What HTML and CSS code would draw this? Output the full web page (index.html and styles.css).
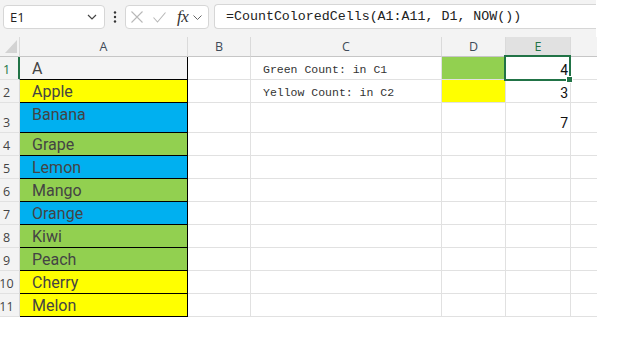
FILE: index.html
```html
<!DOCTYPE html>
<html>
	<head>
		<meta charset="utf-8" />
		<title>Book1 - Excel</title>
		<link rel="stylesheet" href="styles.css">
	</head>
	<body>
		<div class="toolbar">
			<div class="namebox">
				<span>E1</span>
				<svg class="chev" width="10" height="6" viewBox="0 0 10 6"><path d="M1 1 L5 5 L9 1" fill="none" stroke="#444" stroke-width="1.2"/></svg>
			</div>
			<div class="dots">
				<svg width="4" height="12" viewBox="0 0 4 12"><circle cx="2" cy="1.5" r="1.2" fill="#333"/><circle cx="2" cy="6" r="1.2" fill="#333"/><circle cx="2" cy="10.5" r="1.2" fill="#333"/></svg>
			</div>
			<div class="fxbox">
				<svg class="cancel" width="12" height="12" viewBox="0 0 12 12"><path d="M0.5 0.5 L11.5 11.5 M11.5 0.5 L0.5 11.5" stroke="#b8b8b8" stroke-width="1.1"/></svg>
				<svg class="enter" width="13" height="11" viewBox="0 0 13 11"><path d="M0.5 5.5 L4.5 10 L12.5 0.5" fill="none" stroke="#b8b8b8" stroke-width="1.1"/></svg>
				<span class="fx">fx</span>
				<svg class="chev small" width="9" height="5" viewBox="0 0 9 5"><path d="M0.5 0.5 L4.5 4.5 L8.5 0.5" fill="none" stroke="#666" stroke-width="1"/></svg>
			</div>
			<div class="formula">=CountColoredCells(A1:A11, D1, NOW())</div>
		</div>

		<div class="sheet">
			<!-- column headers -->
			<div class="corner"><svg width="12" height="13" viewBox="0 0 12 13"><path d="M12 0 L12 13 L0 13 Z" fill="#d3d3d3"/></svg></div>
			<div class="hd">A</div>
			<div class="hd">B</div>
			<div class="hd">C</div>
			<div class="hd">D</div>
			<div class="hd sel">E</div>
			<div class="hd last"></div>

			<div class="rh sel">1</div>
			<div class="cell a gray">A</div>
			<div class="cell"></div>
			<div class="cell mono">Green Count: in C1</div>
			<div class="cell green"></div>
			<div class="cell num active">4<div class="selbox"><div class="handle"></div></div></div>
			<div class="cell last"></div>

			<div class="rh">2</div>
			<div class="cell a yellow">Apple</div>
			<div class="cell"></div>
			<div class="cell mono">Yellow Count: in C2</div>
			<div class="cell yellow"></div>
			<div class="cell num">3</div>
			<div class="cell last"></div>

			<div class="rh">3</div>
			<div class="cell a blue">Banana</div>
			<div class="cell"></div>
			<div class="cell"></div>
			<div class="cell"></div>
			<div class="cell num">7</div>
			<div class="cell last"></div>

			<div class="rh">4</div>
			<div class="cell a green">Grape</div>
			<div class="cell"></div><div class="cell"></div><div class="cell"></div><div class="cell"></div><div class="cell last"></div>

			<div class="rh">5</div>
			<div class="cell a blue">Lemon</div>
			<div class="cell"></div><div class="cell"></div><div class="cell"></div><div class="cell"></div><div class="cell last"></div>

			<div class="rh">6</div>
			<div class="cell a green">Mango</div>
			<div class="cell"></div><div class="cell"></div><div class="cell"></div><div class="cell"></div><div class="cell last"></div>

			<div class="rh">7</div>
			<div class="cell a blue">Orange</div>
			<div class="cell"></div><div class="cell"></div><div class="cell"></div><div class="cell"></div><div class="cell last"></div>

			<div class="rh">8</div>
			<div class="cell a green">Kiwi</div>
			<div class="cell"></div><div class="cell"></div><div class="cell"></div><div class="cell"></div><div class="cell last"></div>

			<div class="rh">9</div>
			<div class="cell a green">Peach</div>
			<div class="cell"></div><div class="cell"></div><div class="cell"></div><div class="cell"></div><div class="cell last"></div>

			<div class="rh">10</div>
			<div class="cell a yellow">Cherry</div>
			<div class="cell"></div><div class="cell"></div><div class="cell"></div><div class="cell"></div><div class="cell last"></div>

			<div class="rh">11</div>
			<div class="cell a yellow">Melon</div>
			<div class="cell"></div><div class="cell"></div><div class="cell"></div><div class="cell"></div><div class="cell last"></div>
		</div>
	</body>
</html>
```

FILE: styles.css
```css
body{
	margin: 0;
	background: #fff;
	font-family: Roboto, "Open Sans", sans-serif;
}

/* formula bar */
.toolbar{
	display: flex;
	align-items: flex-start;
	width: 596px;
	height: 37px;
	padding: 5px 0 0 3px;
	box-sizing: border-box;
	background: #f3f3f3;
}
.namebox{
	width: 102px;
	height: 24px;
	box-sizing: border-box;
	border: 1px solid #d6d6d6;
	border-radius: 4px;
	background: #fff;
	display: flex;
	align-items: center;
	justify-content: space-between;
	padding: 0 7px 0 6px;
	font: 13px "Open Sans", sans-serif;
	color: #222;
}
.dots{
	width: 20px;
	height: 24px;
	display: flex;
	align-items: center;
	justify-content: center;
}
.fxbox{
	width: 84px;
	height: 24px;
	box-sizing: border-box;
	border: 1px solid #d6d6d6;
	border-radius: 4px;
	background: #fff;
	display: flex;
	align-items: center;
	padding-left: 5px;
}
.fxbox .enter{
	margin-left: 10px;
}
.fx{
	margin-left: 11px;
	font: italic 17px/20px "Liberation Serif", serif;
	color: #333;
	letter-spacing: -0.5px;
}
.fxbox .small{
	margin-left: 5px;
}
.formula{
	margin: -1px 0 0 5px;
	flex: 1;
	height: 25px;
	box-sizing: border-box;
	border: 1px solid #d6d6d6;
	border-right: 0;
	border-radius: 4px 0 0 4px;
	background: #fff;
	padding-left: 11px;
	font: 13.3px/23px "Liberation Mono", monospace;
	color: #222;
	white-space: nowrap;
}

/* grid */
.sheet{
	display: grid;
	grid-template-columns: 20px 168px 63px 191px 64px 65px 26px;
	grid-template-rows: 20px 23px 23px 30px repeat(8, 23px);
	width: 597px;
}
.sheet > div{
	box-sizing: border-box;
	white-space: nowrap;
}
.corner{
	background: #f3f3f3;
	border-right: 1px solid #dadada;
	border-bottom: 1px solid #c6c6c6;
	padding: 3px 0 0 5px;
}
.corner svg{
	display: block;
}
.hd{
	background: #f3f3f3;
	border-right: 1px solid #dadada;
	border-bottom: 1px solid #c6c6c6;
	text-align: center;
	font: 12.5px/19px "Open Sans", sans-serif;
	color: #3e4a58;
}
.hd.sel{
	background: #e1e1e1;
	color: #217346;
}
.hd.last{
	border-right: 0;
}
.rh{
	background: #f3f3f3;
	border-right: 1px solid #dadada;
	border-bottom: 1px solid #e1e1e1;
	display: flex;
	align-items: flex-end;
	justify-content: center;
	padding: 0 6px 1px 0;
	font: 12.5px/17px "Open Sans", sans-serif;
	color: #444;
}
.rh.sel{
	color: #217346;
	border-right-color: #217346;
	box-shadow: inset -1px 0 #217346;
}
.cell{
	border-right: 1px solid #e1e1e1;
	border-bottom: 1px solid #e1e1e1;
}
.cell.last{
	border-right: 0;
}
.cell.a{
	border-right-color: #000;
	border-bottom-color: #000;
	padding: 1px 0 0 12px;
	font-size: 16px;
	line-height: 22px;
	color: #444;
}
.gray{
	background: #f4f4f4;
}
.yellow{
	background: #ffff00;
}
.blue{
	background: #00b0f0;
}
.green{
	background: #92d050;
}
.mono{
	padding: 5px 0 0 12px;
	font: 11.5px/16px "Liberation Mono", monospace;
	color: #333;
}
.num{
	display: flex;
	align-items: flex-end;
	justify-content: flex-end;
	padding: 0 2px 1px 0;
	font-size: 14px;
	line-height: 16px;
	color: #111;
}
.active{
	position: relative;
}
.selbox{
	position: absolute;
	left: -2px;
	top: -2px;
	width: 67px;
	height: 26px;
	box-sizing: border-box;
	border: 2px solid #217346;
}
.handle{
	position: absolute;
	left: 61px;
	top: 20px;
	width: 5px;
	height: 5px;
	background: #217346;
	box-shadow: 0 0 0 1px #fff;
}
```
